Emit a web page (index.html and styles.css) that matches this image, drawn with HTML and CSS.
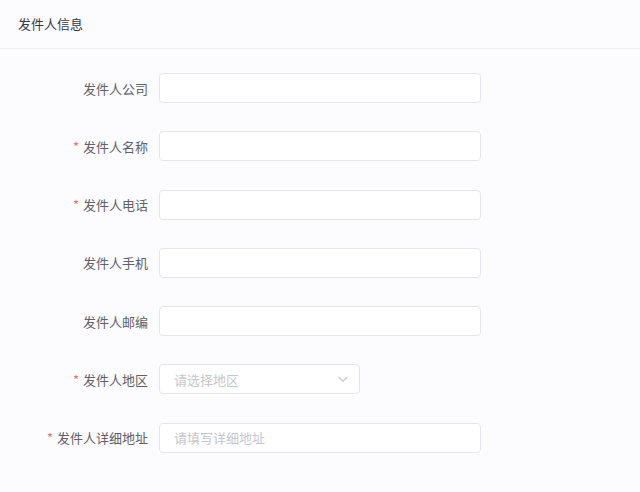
FILE: index.html
```html
<!DOCTYPE html>
<html lang="zh-CN">
  <head>
    <meta charset="UTF-8" />
    <meta name="viewport" content="width=device-width, initial-scale=1.0" />
    <title>发件人信息</title>
    <link rel="stylesheet" href="styles.css">
  </head>
  <body>
    <div class="card">
      <div class="card-header">发件人信息</div>
      <form class="form">
        <div class="form-item">
          <label class="form-label">发件人公司</label>
          <input class="input" type="text" />
        </div>
        <div class="form-item">
          <label class="form-label required">发件人名称</label>
          <input class="input" type="text" />
        </div>
        <div class="form-item">
          <label class="form-label required">发件人电话</label>
          <input class="input" type="text" />
        </div>
        <div class="form-item">
          <label class="form-label">发件人手机</label>
          <input class="input" type="text" />
        </div>
        <div class="form-item">
          <label class="form-label">发件人邮编</label>
          <input class="input" type="text" />
        </div>
        <div class="form-item">
          <label class="form-label required">发件人地区</label>
          <div class="select">
            <span class="placeholder">请选择地区</span>
            <svg class="arrow" width="12" height="12" viewBox="0 0 12 12">
              <path d="M1.5 4 L6 8.2 L10.5 4" fill="none" stroke="#c0c4cc" stroke-width="1.2" />
            </svg>
          </div>
        </div>
        <div class="form-item">
          <label class="form-label required">发件人详细地址</label>
          <input class="input" type="text" placeholder="请填写详细地址" />
        </div>
      </form>
    </div>
  </body>
</html>
```

FILE: styles.css
```css
body {
  margin: 0;
  background: #fcfbfe;
  font-family: "Noto Sans CJK SC", "Noto Sans", sans-serif;
  color: #606266;
}

.card-header {
  height: 48px;
  line-height: 47px;
  padding-left: 18px;
  font-size: 13px;
  color: #3a3a3e;
  border-bottom: 1px solid #efedf3;
}

.form {
  padding-top: 24px;
  display: flex;
  flex-direction: column;
  gap: 28.3px;
}

.form-item {
  display: flex;
  align-items: center;
  height: 30px;
}

.form-label {
  flex: 0 0 159px;
  padding-right: 11px;
  box-sizing: border-box;
  text-align: right;
  font-size: 13px;
  color: #606266;
}

.form-label.required::before {
  content: "*";
  color: #f56c6c;
  margin-right: 4px;
}

.input {
  width: 322px;
  height: 30px;
  box-sizing: border-box;
  border: 1px solid #e6e4ec;
  border-radius: 4px;
  background: #fff;
  padding: 0 14px;
  font-family: inherit;
  font-size: 13px;
  color: #606266;
  outline: none;
}

.input::placeholder {
  color: #c6c6cc;
}

.select {
  width: 201px;
  height: 30px;
  box-sizing: border-box;
  border: 1px solid #e6e4ec;
  border-radius: 4px;
  background: #fff;
  padding: 0 14px;
  display: flex;
  align-items: center;
  justify-content: space-between;
  font-size: 13px;
}

.placeholder {
  color: #c6c6cc;
}

.arrow {
  margin-right: -4px;
}
```
